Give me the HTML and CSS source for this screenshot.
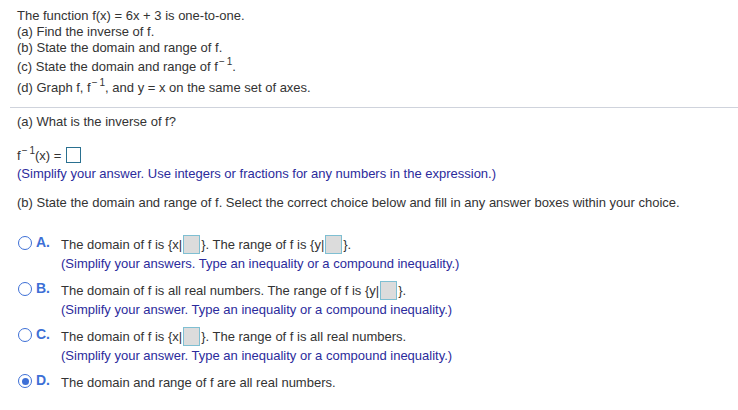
FILE: index.html
```html
<!DOCTYPE html>
<html lang="en">
<head>
    <meta charset="UTF-8">
    <title>Inverse Functions</title>
    <link rel="stylesheet" href="styles.css">
</head>
<body>
    <div class="page">
        <div class="intro">
            <p>The function f(x) = 6x + 3 is one-to-one.</p>
            <p>(a) Find the inverse of f.</p>
            <p>(b) State the domain and range of f.</p>
            <p class="tall">(c) State the domain and range of f<sup>&minus;&thinsp;1</sup>.</p>
            <p class="tall">(d) Graph f, f<sup>&minus;&thinsp;1</sup>, and y = x on the same set of axes.</p>
        </div>

        <hr class="divider">

        <p class="part">(a) What is the inverse of f?</p>
        <p class="answer">f<sup>&minus;&thinsp;1</sup>(x) = <span class="answer-box"></span></p>
        <p class="hint">(Simplify your answer. Use integers or fractions for any numbers in the expression.)</p>

        <p class="part part-b">(b) State the domain and range of f. Select the correct choice below and fill in any answer boxes within your choice.</p>

        <ul class="choices">
            <li class="choice">
                <span class="radio"></span>
                <span class="letter">A.</span>
                <div class="choice-body">
                    <p class="choice-text">The domain of f is {x|<span class="blank"></span>}. The range of f is {y|<span class="blank"></span>}.</p>
                    <p class="hint">(Simplify your answers. Type an inequality or a compound inequality.)</p>
                </div>
            </li>
            <li class="choice">
                <span class="radio"></span>
                <span class="letter">B.</span>
                <div class="choice-body">
                    <p class="choice-text">The domain of f is all real numbers. The range of f is {y|<span class="blank"></span>}.</p>
                    <p class="hint">(Simplify your answer. Type an inequality or a compound inequality.)</p>
                </div>
            </li>
            <li class="choice">
                <span class="radio"></span>
                <span class="letter">C.</span>
                <div class="choice-body">
                    <p class="choice-text">The domain of f is {x|<span class="blank"></span>}. The range of f is all real numbers.</p>
                    <p class="hint">(Simplify your answer. Type an inequality or a compound inequality.)</p>
                </div>
            </li>
            <li class="choice">
                <span class="radio checked"></span>
                <span class="letter">D.</span>
                <div class="choice-body">
                    <p class="choice-text">The domain and range of f are all real numbers.</p>
                </div>
            </li>
        </ul>
    </div>
</body>
</html>
```

FILE: styles.css
```css
* {
    margin: 0;
    padding: 0;
    box-sizing: border-box;
}

body {
    background: #fff;
    color: #333;
    font-family: 'Liberation Sans', Arial, sans-serif;
    font-size: 13px;
}

.page {
    padding: 8px 0 0 17px;
}

p {
    line-height: 16px;
}

sup {
    font-size: 10px;
    line-height: 0;
    vertical-align: 6px;
    margin-left: 1px;
}

.intro .tall {
    line-height: 20px;
    padding-top: 1px;
}

.divider {
    border: none;
    border-top: 1px solid #cfd3dc;
    margin: 9px 0 0 -7px;
}

.part {
    margin-top: 6px;
}

.answer {
    margin-top: 16px;
    line-height: 20px;
}

.answer-box {
    display: inline-block;
    width: 15px;
    height: 16px;
    vertical-align: -3px;
    border: 1px solid #2a7090;
    margin-left: 1px;
}

.hint {
    color: #2b2b9c;
}

.part-b {
    margin-top: 13px;
}

.choices {
    list-style: none;
    margin-top: 24px;
    display: flex;
    flex-direction: column;
    gap: 9px;
}

.choice {
    display: flex;
    align-items: flex-start;
}

.radio {
    width: 14px;
    height: 14px;
    border: 1.5px solid #3d6fd6;
    border-radius: 50%;
    margin: 1px 0 0 1px;
    flex-shrink: 0;
    display: flex;
    align-items: center;
    justify-content: center;
}

.radio.checked::after {
    content: "";
    width: 7px;
    height: 7px;
    border-radius: 50%;
    background: #3d6fd6;
}

.letter {
    width: 25px;
    margin-left: 4px;
    color: #3d6fd6;
    font-weight: bold;
    font-size: 14px;
    line-height: 15px;
}

.choice-text {
    line-height: 20px;
}

.choice-body .hint {
    line-height: 17px;
}

.blank {
    display: inline-block;
    width: 17px;
    height: 19px;
    vertical-align: -5px;
    margin: 0 1px;
    background: #dcdcdc;
    border: 1px solid #7fbfd2;
}
```
